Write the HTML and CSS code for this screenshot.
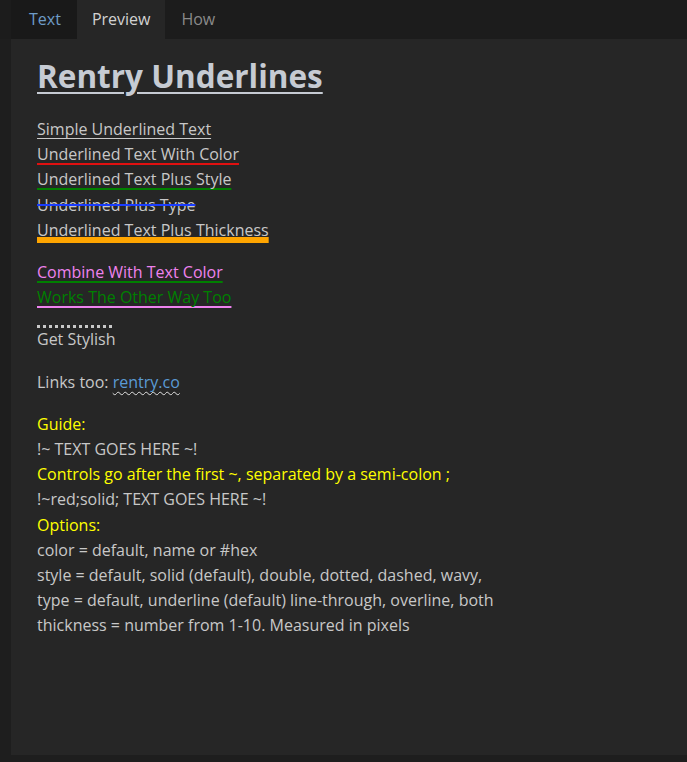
FILE: index.html
```html
<!DOCTYPE html>
<html lang="en">
<head>
    <meta charset="UTF-8">
    <meta name="viewport" content="width=device-width, initial-scale=1.0">
    <title>Rentry Underlines</title>
    <link rel="stylesheet" href="styles.css">
</head>
<body>
    <div class="tabs">
        <a class="tab tab-text">Text</a>
        <a class="tab active">Preview</a>
        <a class="tab tab-how">How</a>
    </div>
    <div class="panel">
        <h1 class="title">Rentry Underlines</h1>

        <p>
            <span class="u">Simple Underlined Text</span><br>
            <span class="u u-red">Underlined Text With Color</span><br>
            <span class="u u-green">Underlined Text Plus Style</span><br>
            <span class="strike-blue">Underlined Plus Type</span><br>
            <span class="u u-thick">Underlined Text Plus Thickness</span>
        </p>

        <p>
            <span class="u violet u-green">Combine With Text Color</span><br>
            <span class="u green u-violet">Works The Other Way Too</span>
        </p>

        <p><span class="stylish">Get Stylish</span></p>

        <p>Links too: <a class="link">rentry.co</a></p>

        <p>
            <span class="yellow">Guide:</span><br>
            !~ TEXT GOES HERE ~!<br>
            <span class="yellow">Controls go after the first ~, separated by a semi-colon ;</span><br>
            !~red;solid; TEXT GOES HERE ~!<br>
            <span class="yellow">Options:</span><br>
            color = default, name or #hex<br>
            style = default, solid (default), double, dotted, dashed, wavy,<br>
            type = default, underline (default) line-through, overline, both<br>
            thickness = number from 1-10. Measured in pixels
        </p>
    </div>
</body>
</html>
```

FILE: styles.css
```css
body {
    margin: 0;
    background-color: #1e1e1e;
    font-family: 'Open Sans', 'Noto Sans', sans-serif;
    color: #c8c8c8;
    height: 762px;
    display: flex;
    flex-direction: column;
}

.tabs {
    display: flex;
    height: 39px;
    padding-left: 11px;
    background-color: #1c1c1c;
}

.tab {
    display: flex;
    align-items: center;
    padding: 0 16px 1px 16px;
    font-size: 16px;
    color: #8a8a8a;
    cursor: pointer;
}

.tab-text {
    background-color: #191919;
    color: #6e9cc7;
    padding-left: 18px;
}

.tab.active {
    background-color: #262626;
    color: #d2d2d2;
    padding: 0 15px 1px 15px;
}

.panel {
    flex: 1;
    margin: 0 0 7px 11px;
    padding: 18px 26px 0 26px;
    background-color: #262626;
    font-size: 16px;
    line-height: 25.2px;
}

.title {
    margin: 0 0 22px 0;
    font-size: 31.5px;
    line-height: 38px;
    font-weight: 700;
    color: #c6cbd3;
    text-decoration: underline;
    text-decoration-thickness: 2px;
    text-underline-offset: 4px;
}

.panel p {
    margin: 0 0 17px 0;
}

.u {
    text-decoration: underline;
    text-decoration-thickness: 1px;
    text-underline-offset: 3px;
    text-decoration-skip-ink: none;
}

.u-red {
    text-decoration-color: #e01010;
    text-decoration-thickness: 2px;
}

.u-green {
    text-decoration-color: #008000;
    text-decoration-thickness: 2px;
}

.u-violet {
    text-decoration-color: #ee82ee;
    text-decoration-thickness: 2px;
}

.u-thick {
    text-decoration-color: orange;
    text-decoration-thickness: 6px;
    text-underline-offset: 1px;
}

.strike-blue {
    text-decoration: line-through;
    text-decoration-color: #1a3cff;
    text-decoration-thickness: 2px;
}

.violet {
    color: #ee82ee;
}

.green {
    color: #008000;
}

.yellow {
    color: #ffff00;
}

.stylish {
    text-decoration: overline dotted;
    text-decoration-thickness: 3px;
}

.link {
    color: #5b9bd5;
    text-decoration: underline wavy #e0e0e0;
    text-decoration-thickness: 1px;
    text-underline-offset: 3px;
    text-decoration-skip-ink: none;
    cursor: pointer;
}
```
